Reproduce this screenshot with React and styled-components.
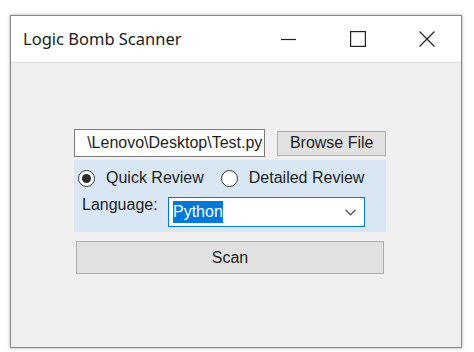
import React from "react";
import styled, { createGlobalStyle } from "styled-components";

const Global = createGlobalStyle`
  html, body { margin: 0; padding: 0; background: #ffffff; }
  body { width: 474px; height: 352px; overflow: hidden; }
`;

const Page = styled.div`
  padding: 15px 0 0 10px;
`;

const Window = styled.div`
  width: 450px;
  height: 331px;
  border: 1px solid #8a8a8a;
  box-shadow: 0 0 3px rgba(0, 0, 0, 0.35);
  background: #f0f0f0;
  display: flex;
  flex-direction: column;
`;

const TitleBar = styled.div`
  height: 46px;
  background: #ffffff;
  border-bottom: 1px solid #dcdcdc;
  display: flex;
  align-items: center;
`;

const Title = styled.div`
  flex: 1;
  padding-left: 12px;
  padding-bottom: 2px;
  font-family: "Noto Sans", "Open Sans", sans-serif;
  font-size: 16.5px;
  color: #1a1a1a;
`;

const Caption = styled.div`
  width: 69px;
  height: 46px;
  display: flex;
  align-items: center;
  justify-content: center;
  color: #222;
`;

const Content = styled.div`
  flex: 1;
  padding: 66px 0 0 63px;
  font-family: "Liberation Sans", Arial, sans-serif;
  font-size: 16px;
  color: #1e1e1e;
`;

const Form = styled.div`
  width: 312px;
  display: flex;
  flex-direction: column;
`;

const FileRow = styled.div`
  display: flex;
  align-items: center;
  gap: 12px;
  margin-bottom: 3px;
`;

const PathBox = styled.div`
  width: 188px;
  height: 26px;
  border: 1px solid #7a7a7a;
  background: #fff;
  display: flex;
  align-items: center;
  justify-content: flex-end;
  overflow: hidden;
  white-space: nowrap;
  padding-right: 2px;
`;

const Button = styled.div`
  box-sizing: border-box;
  width: ${(p) => p.$w}px;
  height: ${(p) => p.$h}px;
  margin-left: ${(p) => p.$ml || 0}px;
  margin-top: ${(p) => p.$mt || 0}px;
  background: #e1e1e1;
  border: 1px solid #adadad;
  display: flex;
  align-items: center;
  justify-content: center;
`;

const Panel = styled.div`
  background: #d9e7f5;
  padding: 6px 4px 5px 4px;
  display: flex;
  flex-direction: column;
  gap: 7px;
`;

const RadioRow = styled.div`
  height: 24px;
  display: flex;
  align-items: center;
`;

const RadioItem = styled.div`
  display: flex;
  align-items: center;
  gap: 11px;
  margin-left: ${(p) => p.$ml || 0}px;
`;

const Circle = styled.div`
  box-sizing: border-box;
  width: 17px;
  height: 17px;
  border-radius: 50%;
  border: 1px solid #333;
  background: #fff;
  display: flex;
  align-items: center;
  justify-content: center;
  &::after {
    content: "";
    width: 9px;
    height: 9px;
    border-radius: 50%;
    background: ${(p) => (p.$on ? "#2b2b2b" : "transparent")};
  }
`;

const LangRow = styled.div`
  display: flex;
  align-items: flex-start;
`;

const Label = styled.div`
  width: 86px;
  padding-left: 4px;
  margin-top: -1px;
`;

const Combo = styled.div`
  box-sizing: border-box;
  width: 197px;
  height: 30px;
  background: #fff;
  border: 1px solid #0078d7;
  display: flex;
  align-items: center;
  padding: 0 8px 0 4px;
`;

const Selected = styled.span`
  background: #0078d7;
  color: #fff;
  line-height: 22px;
`;

const Spacer = styled.div`
  flex: 1;
`;

export default function App() {
  return (
    <>
      <Global />
      <Page>
        <Window>
          <TitleBar>
            <Title>Logic Bomb Scanner</Title>
            <Caption>
              <svg width="15" height="15" viewBox="0 0 15 15">
                <line x1="0" y1="7.5" x2="15" y2="7.5" stroke="#222" strokeWidth="1.2" />
              </svg>
            </Caption>
            <Caption>
              <svg width="16" height="16" viewBox="0 0 16 16">
                <rect x="0.6" y="0.6" width="14.8" height="14.8" fill="none" stroke="#222" strokeWidth="1.2" />
              </svg>
            </Caption>
            <Caption>
              <svg width="16" height="16" viewBox="0 0 16 16">
                <path d="M0.5 0.5 L15.5 15.5 M15.5 0.5 L0.5 15.5" stroke="#222" strokeWidth="1.2" />
              </svg>
            </Caption>
          </TitleBar>
          <Content>
            <Form>
              <FileRow>
                <PathBox>\Lenovo\Desktop\Test.py</PathBox>
                <Button $w={109} $h={25}>Browse File</Button>
              </FileRow>
              <Panel>
                <RadioRow>
                  <RadioItem>
                    <Circle $on />
                    Quick Review
                  </RadioItem>
                  <RadioItem $ml={17}>
                    <Circle />
                    Detailed Review
                  </RadioItem>
                </RadioRow>
                <LangRow>
                  <Label>Language:</Label>
                  <Combo>
                    <Selected>Python</Selected>
                    <Spacer />
                    <svg width="11" height="7" viewBox="0 0 11 7">
                      <path d="M0.5 0.8 L5.5 5.8 L10.5 0.8" fill="none" stroke="#555" strokeWidth="1.3" />
                    </svg>
                  </Combo>
                </LangRow>
              </Panel>
              <Button $w={308} $h={33} $ml={2} $mt={9}>Scan</Button>
            </Form>
          </Content>
        </Window>
      </Page>
    </>
  );
}
